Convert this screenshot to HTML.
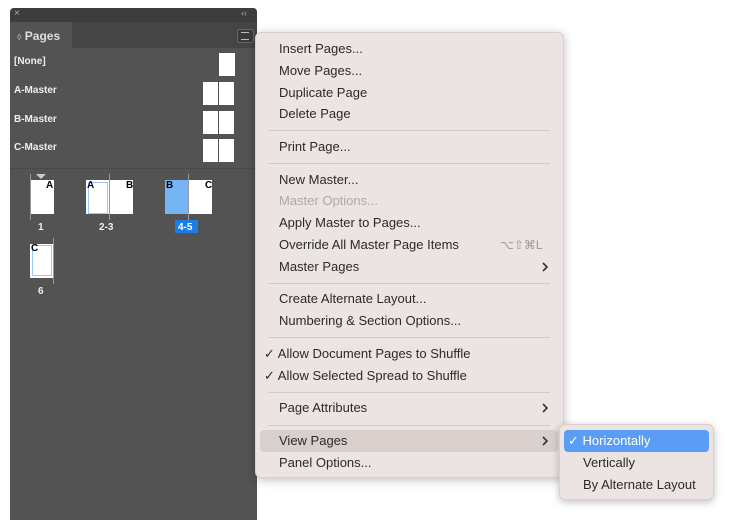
<!DOCTYPE html>
<html><head><style>
body{margin:0;width:732px;height:520px;background:#fff;position:relative;overflow:hidden;font-family:"Liberation Sans",sans-serif}
.a{position:absolute}
.pn{left:10px;top:8px;width:247px;height:512px;background:#535353;border-radius:4px 4px 0 0}
.tb{left:10px;top:8px;width:247px;height:14px;background:#3d3d3d;border-radius:4px 4px 0 0}
.tr{left:10px;top:22px;width:247px;height:26px;background:#454545}
.tab{left:10px;top:22px;width:62px;height:26px;background:#535353}
.lbl{color:#eee;font-size:10px;font-weight:bold}
.pg{background:#fff}
.m{left:255px;top:32px;width:309px;height:446px;background:#ece4e2;border-radius:6px;box-shadow:0 2px 10px rgba(0,0,0,.25);border:1px solid #d8d0ce;box-sizing:border-box}
.it{position:absolute;left:279px;font-size:13px;color:#2a2a2a;line-height:16px}
.sp{position:absolute;left:268px;width:282px;height:1px;background:#d2cac8}
.ch{position:absolute;width:6px;height:10px}
.s{left:559px;top:424px;width:155px;height:76px;background:#ece4e2;border-radius:6px;box-shadow:0 2px 8px rgba(0,0,0,.25);border:1px solid #d8d0ce;box-sizing:border-box}
</style></head><body>
<div class="a pn"></div><div class="a tb"></div><div class="a tr"></div><div class="a tab"></div>
<div class="a" style="left:14px;top:8px;color:#aaa;font-size:10px">×</div>
<div class="a" style="left:241px;top:8px;color:#aaa;font-size:9px">‹‹</div>
<div class="a lbl" style="left:17px;top:29px;font-size:12px;color:#ddd"><span style="font-size:9px;color:#aaa">◊</span> Pages</div>
<div class="a" style="left:237px;top:29px;width:15px;height:12px;background:#3a3a3a;border:1px solid #666;border-radius:2px"></div>
<div class="a" style="left:241px;top:32px;width:8px;height:6px;border-top:1px solid #bbb;border-bottom:1px solid #bbb"></div>
<div class="a lbl" style="left:14px;top:56px">[None]</div>
<div class="a pg" style="left:219px;top:53px;width:16px;height:23px"></div>
<div class="a lbl" style="left:14px;top:85px">A-Master</div>
<div class="a pg" style="left:203px;top:82px;width:15px;height:23px"></div><div class="a pg" style="left:219px;top:82px;width:15px;height:23px"></div>
<div class="a lbl" style="left:14px;top:114px">B-Master</div>
<div class="a pg" style="left:203px;top:111px;width:15px;height:23px"></div><div class="a pg" style="left:219px;top:111px;width:15px;height:23px"></div>
<div class="a lbl" style="left:14px;top:142px">C-Master</div>
<div class="a pg" style="left:203px;top:139px;width:15px;height:23px"></div><div class="a pg" style="left:219px;top:139px;width:15px;height:23px"></div>
<div class="a" style="left:10px;top:168px;width:247px;height:1px;background:#4a4a4a"></div>
<div class="a" style="left:36px;top:174px;border-left:5px solid transparent;border-right:5px solid transparent;border-top:5px solid #ccc"></div>
<div class="a pg" style="left:30px;top:180px;width:24px;height:34px"></div>
<div class="a" style="left:30px;top:174px;width:1px;height:46px;background:#999"></div>
<div class="a" style="left:46px;top:180px;font-size:10px;font-weight:bold">A</div>
<div class="a lbl" style="left:38px;top:222px">1</div>
<div class="a pg" style="left:86px;top:180px;width:47px;height:34px"></div>
<div class="a" style="left:88px;top:182px;width:18px;height:30px;border:1px solid #9cc8f5"></div>
<div class="a" style="left:109px;top:174px;width:1px;height:46px;background:#999"></div>
<div class="a" style="left:87px;top:180px;font-size:10px;font-weight:bold">A</div>
<div class="a" style="left:126px;top:180px;font-size:10px;font-weight:bold">B</div>
<div class="a lbl" style="left:99px;top:222px">2-3</div>
<div class="a pg" style="left:165px;top:180px;width:47px;height:34px"></div>
<div class="a" style="left:165px;top:180px;width:23px;height:34px;background:#75b5f5"></div>
<div class="a" style="left:188px;top:174px;width:1px;height:46px;background:#999"></div>
<div class="a" style="left:166px;top:180px;font-size:10px;font-weight:bold">B</div>
<div class="a" style="left:205px;top:180px;font-size:10px;font-weight:bold">C</div>
<div class="a" style="left:175px;top:220px;width:23px;height:13px;background:#1a7ee6"></div>
<div class="a lbl" style="left:178px;top:222px;color:#fff">4-5</div>
<div class="a pg" style="left:30px;top:244px;width:24px;height:34px"></div>
<div class="a" style="left:32px;top:245px;width:20px;height:31px;border:1px solid #9cc8f5;box-sizing:border-box"></div>
<div class="a" style="left:53px;top:238px;width:1px;height:46px;background:#999"></div>
<div class="a" style="left:31px;top:243px;font-size:10px;font-weight:bold">C</div>
<div class="a lbl" style="left:38px;top:286px">6</div>
<div class="a m"></div>
<div class="a" style="left:260px;top:430px;width:298px;height:22px;background:#d9cfcd;border-radius:4px"></div>
<div class="it" style="top:41px">Insert Pages...</div>
<div class="it" style="top:63px">Move Pages...</div>
<div class="it" style="top:85px">Duplicate Page</div>
<div class="it" style="top:106px">Delete Page</div>
<div class="sp" style="top:130px"></div>
<div class="it" style="top:139px">Print Page...</div>
<div class="sp" style="top:163px"></div>
<div class="it" style="top:172px">New Master...</div>
<div class="it" style="top:193px;color:#aaa">Master Options...</div>
<div class="it" style="top:215px">Apply Master to Pages...</div>
<div class="it" style="top:237px">Override All Master Page Items</div>
<div class="it" style="top:237px;left:500px;color:#999;font-size:12px">⌥⇧⌘L</div>
<div class="it" style="top:259px">Master Pages</div>
<svg class="ch" style="left:542px;top:262px" viewBox="0 0 6 10"><path d="M1 1L5 5L1 9" fill="none" stroke="#333" stroke-width="1.6"/></svg>
<div class="sp" style="top:283px"></div>
<div class="it" style="top:291px">Create Alternate Layout...</div>
<div class="it" style="top:313px">Numbering &amp; Section Options...</div>
<div class="sp" style="top:337px"></div>
<div class="it" style="top:346px;left:264px">✓ Allow Document Pages to Shuffle</div>
<div class="it" style="top:368px;left:264px">✓ Allow Selected Spread to Shuffle</div>
<div class="sp" style="top:392px"></div>
<div class="it" style="top:400px">Page Attributes</div>
<svg class="ch" style="left:542px;top:403px" viewBox="0 0 6 10"><path d="M1 1L5 5L1 9" fill="none" stroke="#333" stroke-width="1.6"/></svg>
<div class="sp" style="top:425px"></div>
<div class="it" style="top:433px">View Pages</div>
<svg class="ch" style="left:542px;top:436px" viewBox="0 0 6 10"><path d="M1 1L5 5L1 9" fill="none" stroke="#333" stroke-width="1.6"/></svg>
<div class="it" style="top:455px">Panel Options...</div>
<div class="a s"></div>
<div class="a" style="left:564px;top:430px;width:145px;height:22px;background:#5b9df5;border-radius:4px"></div>
<div class="it" style="top:433px;left:568px;color:#fff">✓ Horizontally</div>
<div class="it" style="top:455px;left:583px">Vertically</div>
<div class="it" style="top:477px;left:583px">By Alternate Layout</div>
</body></html>
